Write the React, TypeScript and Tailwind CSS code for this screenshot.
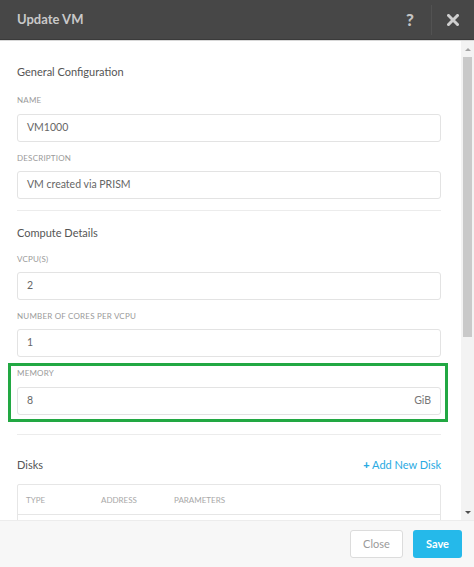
export default function App() {
  const font = { fontFamily: "Lato, 'Open Sans', Arial, sans-serif" };

  const Label = ({ text, className = "" }: { text: string; className?: string }) => (
    <div className={`text-[8px] leading-[10px] tracking-[0.2px] text-[#9a9a9a] uppercase ${className}`}>{text}</div>
  );

  const Input = ({ value, suffix, gap = "mt-[8px]" }: { value: string; suffix?: string; gap?: string }) => (
    <div className={`h-[28px] ${gap} border border-[#e3e3e3] rounded-[3px] flex items-center justify-between px-[9px] text-[10.5px] text-[#666]`}>
      <span>{value}</span>
      {suffix && <span className="text-[#777]">{suffix}</span>}
    </div>
  );

  return (
    <div className="w-[474px] h-[567px] flex flex-col bg-white overflow-hidden" style={font}>
      {/* Header */}
      <div className="h-[40px] bg-[#474747] flex items-center pl-[17px] border-b border-[#3a3a3a]">
        <span className="text-[13px] font-bold text-[#c9c9c9] flex-1">Update VM</span>
        <span className="text-[17px] font-black text-[#c4c4c4] w-[20px] text-center">?</span>
        <div className="w-px h-[30px] bg-[#525252] ml-[11px]" />
        <div className="w-[42px] flex items-center justify-center">
          <svg width="12" height="12" viewBox="0 0 12 12">
            <path d="M1.5 1.5 L10.5 10.5 M10.5 1.5 L1.5 10.5" stroke="#cfcfcf" strokeWidth="3" strokeLinecap="square" />
          </svg>
        </div>
      </div>
      <div className="h-px bg-[#d8d8d8]" />

      {/* Body */}
      <div className="flex-1 flex min-h-0">
        <div className="flex-1 overflow-hidden pl-[17px] pr-[20px] pt-[24px]">
          <div className="text-[11px] leading-[14px] text-[#555]">General Configuration</div>
          <Label text="Name" className="mt-[16px]" />
          <Input value="VM1000" gap="mt-[9px]" />
          <Label text="Description" className="mt-[11px]" />
          <Input value="VM created via PRISM" />
          <div className="h-px bg-[#ececec] mt-[11px]" />

          <div className="text-[11px] leading-[14px] text-[#555] mt-[15px]">Compute Details</div>
          <Label text="vCPU(s)" className="mt-[14px]" />
          <Input value="2" />
          <Label text="Number of cores per vCPU" className="mt-[11px]" />
          <Input value="1" />

          <div className="ml-[-9px] mr-[-7px] mt-[6px] border-[3px] border-[#22a843] pl-[6px] pr-[4px] pt-[2px] pb-[4px]">
            <Label text="Memory" />
            <Input value="8" suffix="GiB" gap="mt-[9px]" />
          </div>
          <div className="h-px bg-[#ececec] mt-[12px]" />

          <div className="flex items-center justify-between mt-[23px] text-[11px] leading-[14px]">
            <span className="text-[#555]">Disks</span>
            <span className="text-[#2aaae2]">
              <span className="font-black">+</span> Add New Disk
            </span>
          </div>
          <div className="mt-[12px] border border-[#e6e6e6] rounded-[2px]">
            <div className="h-[30px] flex items-center text-[8px] text-[#a8a8a8] border-b border-[#e6e6e6] pl-[8px]">
              <span className="w-[75px]">TYPE</span>
              <span className="w-[73px]">ADDRESS</span>
              <span>PARAMETERS</span>
            </div>
            <div className="h-[40px]" />
          </div>
        </div>

        {/* Scrollbar */}
        <div className="w-[13px] bg-[#f3f3f3] flex flex-col items-center">
          <div className="h-[16px] flex items-center justify-center">
            <div className="w-0 h-0 border-l-[3px] border-r-[3px] border-b-[3px] border-l-transparent border-r-transparent border-b-[#a3a3a3]" />
          </div>
          <div className="w-[9px] h-[280px] bg-[#c9c9c9]" />
          <div className="flex-1" />
          <div className="h-[16px] flex items-center justify-center">
            <div className="w-0 h-0 border-l-[3px] border-r-[3px] border-t-[3px] border-l-transparent border-r-transparent border-t-[#505050]" />
          </div>
        </div>
      </div>

      {/* Footer */}
      <div className="h-[47px] bg-[#f7f7f7] border-t border-[#ececec] flex items-center justify-end gap-[10px] pr-[12px]">
        <button className="w-[53px] h-[28px] rounded-[3px] border border-[#dcdcdc] bg-white text-[11px] text-[#9a9a9a]">Close</button>
        <button className="w-[49px] h-[28px] rounded-[3px] bg-[#25b9ea] text-[11px] font-bold text-white">Save</button>
      </div>
    </div>
  );
}
